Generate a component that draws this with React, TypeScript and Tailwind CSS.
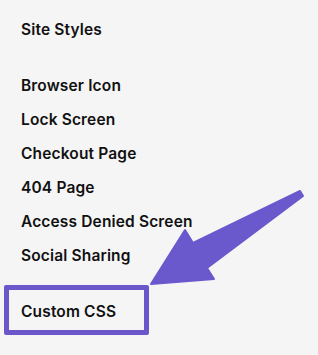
const items = [
  "Browser Icon",
  "Lock Screen",
  "Checkout Page",
  "404 Page",
  "Access Denied Screen",
  "Social Sharing",
];

export default function App() {
  return (
    <div
      className="relative h-[355px] w-[318px] overflow-hidden bg-[#f5f5f6] text-[15.5px] font-semibold tracking-[0.15px] text-[#111111]"
      style={{ fontFamily: "Inter, 'Liberation Sans', sans-serif" }}
    >
      <p className="mt-[13px] h-[34px] pl-[21px] leading-[34px]">Site Styles</p>

      <ul className="mt-[22px] flex flex-col">
        {items.map((label) => (
          <li key={label} className="h-[34px] pl-[21px] leading-[34px]">
            {label}
          </li>
        ))}
      </ul>

      {/* highlighted item */}
      <div className="ml-[4px] mt-[12px] flex h-[50px] w-[145px] items-center rounded-[2px] border-[5px] border-[#6b57c9] pl-[12px] pt-[3px]">
        Custom CSS
      </div>

      {/* pointer arrow */}
      <svg className="pointer-events-none absolute left-0 top-0" width="318" height="355" viewBox="0 0 318 355">
        <polygon
          points="151,284 185,230 193,243 300,191 303,196 207,268 214,279"
          fill="#6a58cd"
          stroke="#6a58cd"
          strokeWidth="2"
          strokeLinejoin="round"
        />
      </svg>
    </div>
  );
}
